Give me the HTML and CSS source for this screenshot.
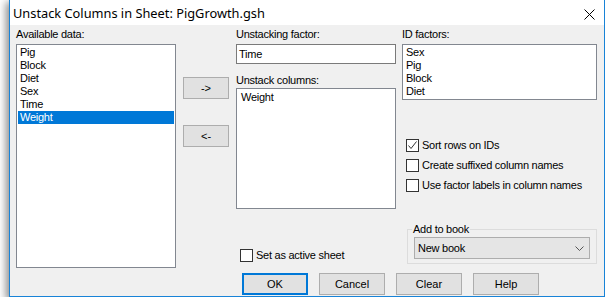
FILE: index.html
```html
<!DOCTYPE html>
<html lang="en">
<head>
    <meta charset="UTF-8">
    <meta name="viewport" content="width=device-width, initial-scale=1.0">
    <title>Unstack Columns in Sheet</title>
    <link rel="stylesheet" href="styles.css">
</head>
<body>

<div class="window">
    <div class="title-bar">
        <span class="title">Unstack Columns in Sheet: PigGrowth.gsh</span>
        <svg class="close" width="11" height="11" viewBox="0 0 11 11">
            <path d="M0.5 0.5 L10.5 10.5 M10.5 0.5 L0.5 10.5" stroke="#000" stroke-width="1" fill="none"/>
        </svg>
    </div>

    <div class="main">
        <div class="col col-data">
            <div class="label">Available data:</div>
            <div class="listbox list-data">
                <div class="item">Pig</div>
                <div class="item">Block</div>
                <div class="item">Diet</div>
                <div class="item">Sex</div>
                <div class="item">Time</div>
                <div class="item selected">Weight</div>
            </div>
        </div>

        <div class="col col-move">
            <button class="btn btn-move">-&gt;</button>
            <button class="btn btn-move btn-back">&lt;-</button>
        </div>

        <div class="col col-unstack">
            <div class="label">Unstacking factor:</div>
            <div class="textbox">Time</div>
            <div class="label label-gap">Unstack columns:</div>
            <div class="listbox list-unstack">
                <div class="item">Weight</div>
            </div>
            <label class="check check-active"><span class="box"></span>Set as active sheet</label>
        </div>

        <div class="col col-ids">
            <div class="label">ID factors:</div>
            <div class="listbox list-ids">
                <div class="item">Sex</div>
                <div class="item">Pig</div>
                <div class="item">Block</div>
                <div class="item">Diet</div>
            </div>
            <div class="options">
                <label class="check"><span class="box"><svg width="11" height="11" viewBox="0 0 11 11"><path d="M1.5 5.5 L4 8.5 L9.5 1.5" stroke="#333" stroke-width="1" fill="none"/></svg></span>Sort rows on IDs</label>
                <label class="check"><span class="box"></span>Create suffixed column names</label>
                <label class="check"><span class="box"></span>Use factor labels in column names</label>
            </div>
            <fieldset class="group">
                <legend>Add to book</legend>
                <div class="combo">
                    <span>New book</span>
                    <svg width="9" height="5" viewBox="0 0 9 5"><path d="M0.5 0.5 L4.5 4.5 L8.5 0.5" stroke="#555" stroke-width="1" fill="none"/></svg>
                </div>
            </fieldset>
        </div>
    </div>

    <div class="actions">
        <button class="btn btn-action btn-default">OK</button>
        <button class="btn btn-action">Cancel</button>
        <button class="btn btn-action">Clear</button>
        <button class="btn btn-action">Help</button>
    </div>
</div>

</body>
</html>
```

FILE: styles.css
```css
body {
    margin: 0;
    background-color: #fff;
    font-family: "Liberation Sans", Arial, sans-serif;
    font-size: 11px;
    letter-spacing: -0.25px;
    color: #000;
    overflow: hidden;
}

.window {
    box-sizing: border-box;
    width: 596px;
    height: 297px;
    margin-left: 9px;
    background-color: #f0f0f0;
    border: 1px solid #1883d7;
    border-top: none;
    box-shadow: -2px 3px 8px 1px rgba(0,0,0,0.45);
}

.title-bar {
    height: 25px;
    background-color: #fff;
    display: flex;
    align-items: center;
    justify-content: space-between;
    padding: 0 9px 0 3px;
}

.title {
    font-family: "Noto Sans", sans-serif;
    font-size: 12.8px;
    letter-spacing: 0;
    margin-top: 1px;
}

.close {
    margin-top: 3px;
}

.main {
    display: flex;
    height: 243px;
    padding-left: 6px;
}

.col {
    display: flex;
    flex-direction: column;
}

.col-data { width: 160px; margin-right: 7px; }
.col-move { width: 46px; margin-right: 7px; }
.col-unstack { width: 160px; margin-right: 6px; }
.col-ids { width: 195px; }

.label {
    height: 13px;
    line-height: 13px;
    margin: 3px 0 3px;
    white-space: nowrap;
}

.label-gap {
    margin: 10px 0 1px;
}

.listbox {
    box-sizing: border-box;
    background-color: #fff;
    border: 1px solid #828790;
    padding: 1px;
}

.list-data { height: 224px; }
.list-unstack { height: 121px; }
.list-ids { height: 56px; }

.item {
    height: 13px;
    line-height: 13px;
    padding-left: 2px;
    white-space: nowrap;
}

.list-unstack .item {
    margin-top: 1px;
    padding-left: 3px;
}

.item.selected {
    background-color: #0078d7;
    color: #fff;
}

.textbox {
    box-sizing: border-box;
    height: 20px;
    line-height: 18px;
    background-color: #fff;
    border: 1px solid #7a7a7a;
    padding-left: 2px;
}

.btn {
    box-sizing: border-box;
    font-family: "Liberation Sans", Arial, sans-serif;
    font-size: 11px;
    color: #000;
    background-color: #e1e1e1;
    border: 1px solid #adadad;
    padding: 0;
    height: 22px;
}

.btn-move {
    width: 46px;
    margin-top: 52px;
}

.btn-back {
    margin-top: 26px;
}

.check {
    display: flex;
    align-items: center;
    height: 20px;
    white-space: nowrap;
}

.box {
    box-sizing: border-box;
    width: 13px;
    height: 13px;
    border: 1px solid #333;
    background-color: #fff;
    margin: 0 3px 0 4px;
    display: flex;
}

.check-active {
    margin-top: 36px;
}

.options {
    margin-top: 35px;
}

.group {
    margin: 28px 0 0 5px;
    padding: 0 6px 4px;
    width: 190px;
    box-sizing: border-box;
    border: 1px solid #dcdcdc;
}

.group legend {
    padding: 0 1px;
    margin-left: -2px;
    line-height: 13px;
}

.combo {
    box-sizing: border-box;
    height: 22px;
    background-color: #e5e5e5;
    border: 1px solid #adadad;
    display: flex;
    align-items: center;
    justify-content: space-between;
    padding: 0 5px 0 3px;
    margin-top: 1px;
}

.actions {
    display: flex;
    gap: 11px;
    padding-left: 232px;
    margin-top: 5px;
}

.btn-action {
    width: 66px;
}

.btn-default {
    border: 2px solid #0078d7;
}
```
